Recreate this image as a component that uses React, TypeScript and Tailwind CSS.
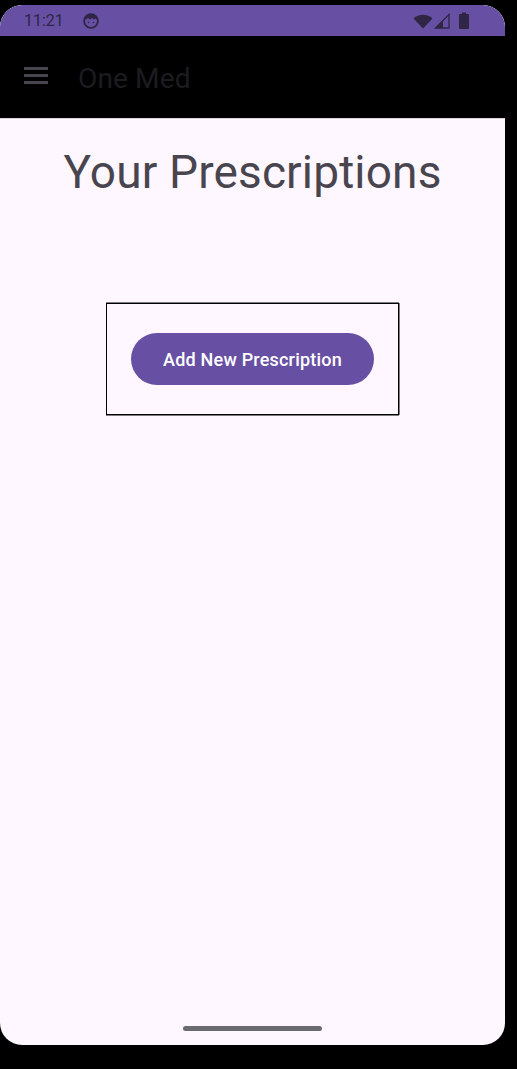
const font = "font-['Roboto',sans-serif]";

function StatusBar() {
  return (
    <div className="h-[31px] bg-[#6750a4] rounded-t-[22px] flex items-center pl-6 pr-[36px] text-[#2f2545]">
      <span className="text-[16px] leading-none">11:21</span>
      <svg className="ml-[19px]" width="16" height="16" viewBox="0 0 16 16">
        <circle cx="8" cy="8" r="6.9" fill="none" stroke="currentColor" strokeWidth="1.8" />
        <path d="M1.5 7C2.5 2.5 5 1 8 1S13.5 2.5 14.5 7L12.5 5.5 11 6.5 9 5 7 6.5 5 5 3.5 6Z" fill="currentColor" />
        <circle cx="5.5" cy="9.5" r="0.8" fill="currentColor" />
        <circle cx="10.5" cy="9.5" r="0.8" fill="currentColor" />
      </svg>
      <div className="ml-auto flex items-center">
        <svg width="20" height="16" viewBox="0 0 20 16">
          <path d="M0.5 5.5C5.5 0.5 14.5 0.5 19.5 5.5L10 15.5Z" fill="currentColor" />
        </svg>
        <svg className="ml-[1px]" width="16" height="16" viewBox="0 0 16 16">
          <path d="M15 1.5V15H1.5Z" fill="none" stroke="currentColor" strokeWidth="1.3" />
          <path d="M9 8V15H2Z" fill="currentColor" />
        </svg>
        <svg className="ml-[9px]" width="10" height="17" viewBox="0 0 10 17">
          <path d="M3 0.5H7V2H9A1 1 0 0 1 10 3V16A1 1 0 0 1 9 17H1A1 1 0 0 1 0 16V3A1 1 0 0 1 1 2H3Z" fill="currentColor" />
        </svg>
      </div>
    </div>
  );
}

export default function App() {
  return (
    <div className={`${font} w-[517px] h-[1069px] bg-black pt-[5px] pr-3 overflow-hidden`}>
      <div className="w-[505px] h-[1040px] flex flex-col rounded-[22px] bg-[#fef7ff] overflow-hidden">
        <StatusBar />
        <header className="h-[83px] shrink-0 bg-black flex items-center pl-6 border-b border-[#ddd5e3]">
          <div className="w-6 mb-[3px] flex flex-col gap-[4px]">
            <div className="h-[3px] bg-[#49454f]" />
            <div className="h-[3px] bg-[#49454f]" />
            <div className="h-[3px] bg-[#49454f]" />
          </div>
          <h1 className="ml-[30px] mt-[3px] text-[28px] leading-none tracking-[0.15px] text-[#1d1b20]">One Med</h1>
        </header>
        <main className="flex-1 flex flex-col items-center relative">
          <h2 className="mt-[27px] text-[46px] leading-[52px] tracking-[0.15px] text-[#49454f]">Your Prescriptions</h2>
          <div className="mt-[105px] w-[293px] h-[112px] border border-black shadow-[0_-1px_0_rgba(0,0,0,0.5),1px_0_0_rgba(0,0,0,0.5),0_1px_0_rgba(0,0,0,0.5)] flex items-center justify-center">
            <button className="w-[243px] h-[52px] pt-[2px] rounded-full bg-[#6750a4] text-white text-lg font-medium tracking-[0.2px]">
              Add New Prescription
            </button>
          </div>
          <div className="absolute bottom-[14px] left-[183px] w-[139px] h-[5px] rounded-full bg-[#6b6a6f]" />
        </main>
      </div>
    </div>
  );
}
